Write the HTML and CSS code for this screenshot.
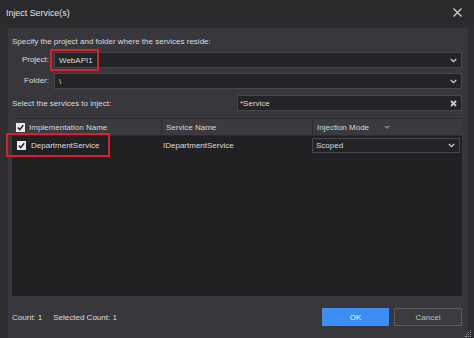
FILE: index.html
```html
<!DOCTYPE html>
<html><head><meta charset="UTF-8"><title>Inject Service(s)</title>
<link rel="stylesheet" href="styles.css">
</head>
<body>
<div class="window">
    <div class="titlebar">
        <span class="title">Inject Service(s)</span>
        <svg class="close" width="9" height="9" viewBox="0 0 9 9"><path d="M0.5 0.5L8.5 8.5M8.5 0.5L0.5 8.5" stroke="#d8d8d8" stroke-width="1.1"/></svg>
    </div>
    <div class="panel">
        <div class="intro">Specify the project and folder where the services reside:</div>
        <div class="field project">
            <label>Project:</label>
            <div class="combo">
                <span>WebAPI1</span>
                <svg class="chevron" width="7" height="5" viewBox="0 0 7 5"><path d="M0.8 1L3.5 3.7L6.2 1" fill="none" stroke="#cfcfcf" stroke-width="1.3"/></svg>
            </div>
            <span class="highlight hl-project"></span>
        </div>
        <div class="field folder">
            <label>Folder:</label>
            <div class="combo">
                <span>\</span>
                <svg class="chevron" width="7" height="5" viewBox="0 0 7 5"><path d="M0.8 1L3.5 3.7L6.2 1" fill="none" stroke="#cfcfcf" stroke-width="1.3"/></svg>
            </div>
        </div>
        <div class="select-row">
            <span>Select the services to inject:</span>
            <div class="filter">
                <span>*Service</span>
                <svg class="clear" width="7" height="7" viewBox="0 0 7 7"><path d="M1 1L6 6M6 1L1 6" stroke="#c8c8c8" stroke-width="1.8"/></svg>
            </div>
        </div>
        <div class="grid">
            <div class="grid-head">
                <div class="cell c1"><span class="check"><svg width="9" height="9" viewBox="0 0 9 9"><path d="M1.8 4.6L3.7 6.6L7.3 2.2" fill="none" stroke="#1e1e20" stroke-width="1.4"/></svg></span>Implementation Name</div>
                <div class="cell c2">Service Name</div>
                <div class="cell c3">Injection Mode<span class="sort"></span></div>
            </div>
            <div class="grid-row">
                <div class="cell c1"><span class="check"><svg width="9" height="9" viewBox="0 0 9 9"><path d="M1.8 4.6L3.7 6.6L7.3 2.2" fill="none" stroke="#1e1e20" stroke-width="1.4"/></svg></span>DepartmentService</div>
                <div class="cell c2">IDepartmentService</div>
                <div class="cell c3">
                    <div class="mode">
                        <span>Scoped</span>
                        <svg class="chevron" width="7" height="5" viewBox="0 0 7 5"><path d="M0.8 1L3.5 3.7L6.2 1" fill="none" stroke="#cfcfcf" stroke-width="1.3"/></svg>
                    </div>
                </div>
            </div>
            <span class="highlight hl-row"></span>
        </div>
        <div class="footer">
            <span class="count">Count: 1</span>
            <span class="count">Selected Count: 1</span>
            <button class="btn ok">OK</button>
            <button class="btn cancel">Cancel</button>
        </div>
    </div>
    <svg class="grip" width="7" height="7" viewBox="0 0 7 7" fill="#9a9a9e">
        <rect x="5" y="0" width="1" height="1"/>
        <rect x="3" y="2" width="1" height="1"/><rect x="5" y="2" width="1" height="1"/>
        <rect x="1" y="4" width="1" height="1"/><rect x="3" y="4" width="1" height="1"/><rect x="5" y="4" width="1" height="1"/>
        <rect x="0" y="6" width="1" height="1"/><rect x="1" y="6" width="1" height="1"/><rect x="3" y="6" width="1" height="1"/><rect x="5" y="6" width="1" height="1"/>
    </svg>
</div>
</body></html>
```

FILE: styles.css
```css
body {
    margin: 0;
    background-color: #2e2e31;
    font-family: 'Liberation Sans', Arial, sans-serif;
    font-size: 8px;
    color: #dcdcdc;
    overflow: hidden;
}

.window {
    position: relative;
    width: 474px;
    height: 338px;
}

.titlebar {
    height: 25px;
    display: flex;
    align-items: center;
    justify-content: space-between;
    padding: 0 12px 0 6px;
    background-color: #2a2a2d;
}

.title {
    font-size: 8.9px;
    color: #e2e2e2;
}

.panel {
    margin: 3px 6px 0 8px;
    height: 310px;
    padding: 0 6px 0 4px;
    background-color: #38383c;
    display: flex;
    flex-direction: column;
}

.intro {
    margin-top: 6px;
    line-height: 16px;
}

.field {
    position: relative;
    display: flex;
    height: 16px;
    margin-top: 5px;
}

.field.project {
    margin-top: 2px;
}

.field label {
    width: 37px;
    text-align: right;
    line-height: 16px;
    margin-right: 5px;
}

.combo,
.filter,
.mode {
    flex: 1;
    display: flex;
    align-items: center;
    justify-content: space-between;
    background-color: #242427;
    border: 1px solid #47474b;
    padding: 0 4px 0 4px;
}

.select-row {
    display: flex;
    align-items: center;
    height: 16px;
    margin-top: 6px;
}

.filter {
    flex: none;
    width: 217px;
    height: 14px;
    margin-left: auto;
    padding: 0 4px 0 2px;
}

.highlight {
    position: absolute;
    border: 2px solid #d9202b;
    box-sizing: border-box;
}

.hl-project {
    left: 38px;
    top: -3px;
    width: 49px;
    height: 22px;
}

.grid {
    position: relative;
    margin-top: 7px;
    height: 178px;
    background-color: #212124;
}

.grid-head,
.grid-row {
    display: grid;
    grid-template-columns: 149px 151px 1fr;
}

.grid-head {
    height: 16px;
    background-color: #3b3b3f;
    border-top: 1px solid #2c2c2f;
    border-bottom: 1px solid #2c2c2f;
    color: #d6d6d6;
}

.grid-head .cell {
    padding-left: 4px;
    border-left: 1px solid #2c2c2f;
}

.grid-head .c1 {
    border-left: none;
}

.cell {
    display: flex;
    align-items: center;
    white-space: nowrap;
}

.grid-row {
    height: 18px;
}

.grid-row .c1 {
    padding-left: 5px;
}

.grid-row .c2 {
    padding-left: 2px;
}

.grid-row .c3 {
    padding-right: 2px;
    align-items: flex-start;
}

.mode {
    height: 13px;
    margin-top: 2px;
    padding-left: 3px;
}

.check {
    width: 9px;
    height: 9px;
    background-color: #ececec;
    margin-right: 4px;
    display: flex;
}

.grid-row .check {
    margin-right: 5px;
}

.sort {
    margin-left: 15px;
    width: 0;
    height: 0;
    border-left: 3px solid transparent;
    border-right: 3px solid transparent;
    border-top: 3px solid #7c7c80;
}

.hl-row {
    left: -6px;
    top: 15px;
    width: 104px;
    height: 24px;
}

.footer {
    display: flex;
    align-items: center;
    margin-top: 12px;
    height: 18px;
}

.count {
    margin-right: 11px;
}

.btn {
    width: 67px;
    height: 18px;
    padding: 0;
    font-family: inherit;
    font-size: 8px;
    border: 1px solid transparent;
}

.ok {
    margin-left: auto;
    background-color: #3d8ef4;
    color: #eef4ff;
}

.cancel {
    margin-left: 5px;
    width: 68px;
    background-color: #3c3c40;
    border-color: #5a5a5e;
    color: #bcbcbc;
}

.grip {
    position: absolute;
    right: 2px;
    bottom: 1px;
}
```
